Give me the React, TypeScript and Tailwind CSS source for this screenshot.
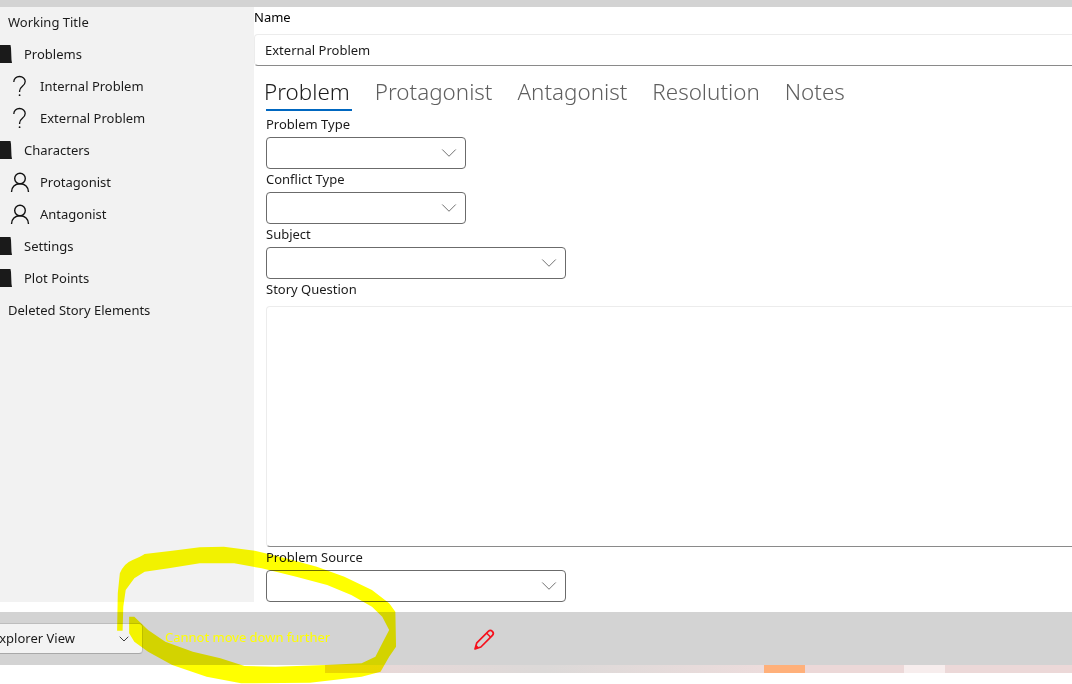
import { ChevronDown } from 'lucide-react';
import React from 'react';

const FolderIcon = () => (
  <svg width="13" height="18" viewBox="0 0 13 18" className="shrink-0">
    <path d="M0 0h10.500l.5 3 .5 12 .5 3H0z" fill="#1a1a1a" />
  </svg>
);

const QuestionIcon = () => (
  <svg width="20" height="24" viewBox="0 0 20 24" fill="none" className="shrink-0">
    <path d="M3.800 8c0-3.300 2.500-5.500 5.700-5.500s5.700 2.100 5.700 5c0 2.200-1.100 3.400-2.800 4.800-1.700 1.400-2.800 2.600-2.800 4.700v1" stroke="#111" strokeWidth="1.300" />
    <circle cx="9.600" cy="21.200" r=".9" fill="#111" />
  </svg>
);

const PersonIcon = () => (
  <svg width="20" height="20" viewBox="0 0 20 20" fill="none" className="shrink-0">
    <circle cx="10" cy="6.500" r="5.300" stroke="#111" strokeWidth="1.400" />
    <path d="M1.500 20c0-4.800 3.500-8.200 8.500-8.200s8.500 3.400 8.500 8.200" stroke="#111" strokeWidth="1.400" />
  </svg>
);

const PencilIcon = () => (
  <svg width="24" height="24" viewBox="0 0 24 24" fill="none" className="shrink-0">
    <path d="M3 22l1.800-6.200L16.300 4.300a2.900 2.900 0 0 1 4.100 4.100L8.900 20z" stroke="#f5101c" strokeWidth="1.700" strokeLinejoin="round" />
    <path d="M3 22l1.200-4.300 3 3z" fill="#f5101c" />
    <path d="M14.500 6l4.200 4.200" stroke="#f5101c" strokeWidth="1.500" />
  </svg>
);

type TreeRow = { label: string; level: 0 | 1 | 2; icon?: 'folder' | 'question' | 'person' };

const treeRows: TreeRow[] = [
  { label: 'Working Title', level: 0 },
  { label: 'Problems', level: 1, icon: 'folder' },
  { label: 'Internal Problem', level: 2, icon: 'question' },
  { label: 'External Problem', level: 2, icon: 'question' },
  { label: 'Characters', level: 1, icon: 'folder' },
  { label: 'Protagonist', level: 2, icon: 'person' },
  { label: 'Antagonist', level: 2, icon: 'person' },
  { label: 'Settings', level: 1, icon: 'folder' },
  { label: 'Plot Points', level: 1, icon: 'folder' },
  { label: 'Deleted Story Elements', level: 0 }
];

const Sidebar = () => (
  <aside className="w-[254px] shrink-0 bg-[#f2f2f2]">
    <div className="-mt-px">
      {treeRows.map(row => (
        <div key={row.label} className="flex h-8 items-center text-[#1b1b1b]">
          {row.level === 0 && <span className="pt-[2px] pl-2">{row.label}</span>}
          {row.level === 1 && (
            <>
              <FolderIcon />
              <span className="pt-[2px] pl-[11px]">{row.label}</span>
            </>
          )}
          {row.level === 2 && (
            <>
              <span className="flex w-10 justify-center">
                {row.icon === 'question' ? <QuestionIcon /> : <PersonIcon />}
              </span>
              <span className="pt-[2px]">{row.label}</span>
            </>
          )}
        </div>
      ))}
    </div>
  </aside>
);

const Select = ({ wide }: { wide?: boolean }) => (
  <div
    className={`flex h-8 items-center justify-end rounded-[4px] border border-[#6b6b6b] bg-white pr-[3px] ${
      wide ? 'w-[300px]' : 'w-[200px]'
    }`}
  >
    <ChevronDown size={26} strokeWidth={0.7} color="#444" />
  </div>
);

const Label = ({ children }: { children: string }) => (
  <div className="h-[23px] leading-5 text-[#1b1b1b]">{children}</div>
);

const tabs = ['Protagonist', 'Antagonist', 'Resolution', 'Notes'];

const Main = () => (
  <main className="min-w-0 flex-1 overflow-hidden bg-white">
    <div className="h-[27px] leading-5 text-black">Name</div>
    <div className="mr-[-10px] flex h-8 items-center rounded-[4px] border border-[#ececec] border-b-[#8a8a8a] pt-[2px] pl-[10px] text-[#1b1b1b]">
      External Problem
    </div>
    <div className="flex h-[48px] gap-[25px] pt-[10px] pl-[10px] text-[22.4px] leading-8 font-light text-[#5f5f5f]">
      <div className="relative text-[#1b1b1b]">
        Problem
        <div className="absolute top-[33px] left-[2px] h-[2px] w-[86px] bg-[#0067c0]" />
      </div>
      {tabs.map(tab => (
        <div key={tab}>{tab}</div>
      ))}
    </div>
    <div className="pl-3">
      <Label>Problem Type</Label>
      <Select />
      <Label>Conflict Type</Label>
      <Select />
      <Label>Subject</Label>
      <Select wide />
      <div className="h-[27px] leading-5 text-[#1b1b1b]">Story Question</div>
      <div className="mr-[-10px] h-[241px] rounded-[4px] border border-[#ececec] border-b-[#8a8a8a]" />
      <Label>Problem Source</Label>
      <Select wide />
    </div>
  </main>
);

const StatusBar = () => (
  <footer className="mt-[10px] flex h-[53px] items-center bg-[#d3d3d3]">
    <div className="ml-[-17px] flex h-[31px] w-[160px] items-center justify-between rounded-[4px] border border-[#bdbdbd] border-b-[#a8a8a8] bg-[#f3f3f3] pr-[10px] pl-[8px] text-[#1b1b1b]">
      <span>Explorer View</span>
      <ChevronDown size={16} strokeWidth={1.4} color="#333" />
    </div>
    <span className="ml-[22px] w-[307px] pb-[2px] text-[#ffff00]">Cannot move down further</span>
    <PencilIcon />
  </footer>
);

const ColorStrip = () => (
  <div className="ml-[325px] flex h-2 bg-[#ecd8d8]">
    <div className="w-[439px] bg-gradient-to-r from-[#ecd8d8] via-[#dcd9d8] to-[#ecdcdc]" />
    <div className="w-[41px] bg-[#ffb07a]" />
    <div className="w-[99px]" />
    <div className="w-[41px] bg-[#f7eded]" />
    <div className="flex-1" />
  </div>
);

export default function App() {
  return (
    <div
      className="relative flex h-[684px] w-[1072px] flex-col overflow-hidden bg-white text-[13px]"
      style={{ fontFamily: '"Noto Sans", sans-serif' }}
    >
      <div className="h-[7px] shrink-0 bg-[#d3d3d3]" />
      <div className="flex h-[595px] shrink-0">
        <Sidebar />
        <Main />
      </div>
      <StatusBar />
      <ColorStrip />
      {/* highlighter scribble laid over the status bar */}
      <svg
        className="pointer-events-none absolute top-[530px] left-0 h-[154px] w-[540px] mix-blend-multiply"
        viewBox="0 0 1568 462"
        preserveAspectRatio="none"
      >
        <path
          fill="#ffff00"
          d="M340 302 342 190 348 130Q360 100 385 90T420 72L500 62 580 52 650 50 740 62 830 85 920 110 1000 140 1080 180 1130 220 1148 245 1150 350 1130 380 1105 425 1050 440 900 458 700 460 600 440 500 405 430 365 390 335 375 310 375 260 390 260 430 300 480 335 560 365 640 385 710 408 800 410 945 405 1050 400 1090 380 1110 340 1130 300 1110 260 1080 230 1020 195 950 165 860 140 760 115 680 100 580 100 490 115 420 125 390 145 365 180 358 230 356 302Z"
        />
      </svg>
    </div>
  );
}
